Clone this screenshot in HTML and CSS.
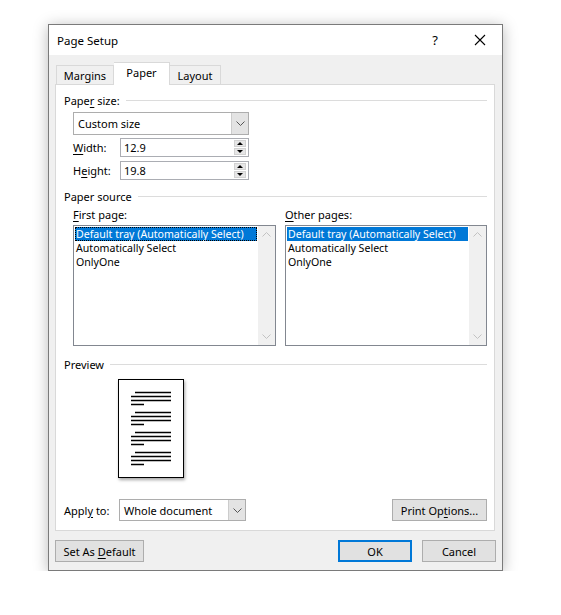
FILE: index.html
```html
<!DOCTYPE html>
<html lang="en">
<head>
  <meta charset="UTF-8">
  <title>Page Setup</title>
  <link rel="stylesheet" href="styles.css">
</head>
<body>
  <div class="dialog">
    <div class="titlebar">
      <span class="title">Page Setup</span>
      <span class="help">?</span>
      <span class="close">
        <svg width="12" height="12" viewBox="0 0 12 12"><path d="M1 1 L11 11 M11 1 L1 11" stroke="#000" stroke-width="1.1" fill="none"/></svg>
      </span>
    </div>

    <div class="tabs">
      <div class="tab tab-margins">Margins</div>
      <div class="tab tab-paper active">Paper</div>
      <div class="tab tab-layout">Layout</div>
    </div>

    <div class="panel">
      <!-- Paper size -->
      <div class="group-title"><span>Pape<u>r</u> size:</span></div>
      <div class="indent">
        <div class="combo size-combo">
          <span class="combo-text">Custom size</span>
          <span class="combo-btn"><svg width="9" height="5" viewBox="0 0 9 5"><path d="M0.5 0.5 L4.5 4.5 L8.5 0.5" stroke="#555" stroke-width="1" fill="none"/></svg></span>
        </div>
        <div class="field-row first">
          <label><u>W</u>idth:</label>
          <div class="spin-input">
            <span class="value">12.9</span>
            <span class="spin"><span class="spin-up"></span><span class="spin-down"></span></span>
          </div>
        </div>
        <div class="field-row">
          <label>H<u>e</u>ight:</label>
          <div class="spin-input">
            <span class="value">19.8</span>
            <span class="spin"><span class="spin-up"></span><span class="spin-down"></span></span>
          </div>
        </div>
      </div>

      <!-- Paper source -->
      <div class="group-title source-title"><span>Paper source</span></div>
      <div class="lists">
        <div class="list-col first-col">
          <div class="list-label"><u>F</u>irst page:</div>
          <div class="listbox">
            <div class="items">
              <div class="item selected">Default tray (Automatically Select)</div>
              <div class="item">Automatically Select</div>
              <div class="item">OnlyOne</div>
            </div>
            <div class="scrollbar">
              <svg width="9" height="5" viewBox="0 0 9 5"><path d="M0.5 4.5 L4.5 0.5 L8.5 4.5" stroke="#c2c2c2" stroke-width="1" fill="none"/></svg>
              <svg width="9" height="5" viewBox="0 0 9 5"><path d="M0.5 0.5 L4.5 4.5 L8.5 0.5" stroke="#c2c2c2" stroke-width="1" fill="none"/></svg>
            </div>
          </div>
        </div>
        <div class="list-col">
          <div class="list-label"><u>O</u>ther pages:</div>
          <div class="listbox">
            <div class="items">
              <div class="item selected plain">Default tray (Automatically Select)</div>
              <div class="item">Automatically Select</div>
              <div class="item">OnlyOne</div>
            </div>
            <div class="scrollbar">
              <svg width="9" height="5" viewBox="0 0 9 5"><path d="M0.5 4.5 L4.5 0.5 L8.5 4.5" stroke="#c2c2c2" stroke-width="1" fill="none"/></svg>
              <svg width="9" height="5" viewBox="0 0 9 5"><path d="M0.5 0.5 L4.5 4.5 L8.5 0.5" stroke="#c2c2c2" stroke-width="1" fill="none"/></svg>
            </div>
          </div>
        </div>
      </div>

      <!-- Preview -->
      <div class="group-title preview-title"><span>Preview</span></div>
      <div class="page">
        <svg width="64" height="97" viewBox="0 0 64 97">
          <g stroke="#000" stroke-width="1.3">
            <path d="M16 12.5 H52 M12 16.5 H52 M12 20.5 H52 M12 24.5 H25"/>
            <path d="M16 32.5 H52 M12 36.5 H52 M12 40.5 H52 M12 44.5 H25"/>
            <path d="M16 52.5 H52 M12 56.5 H52 M12 60.5 H52 M12 64.5 H25"/>
            <path d="M16 72.5 H52 M12 76.5 H52 M12 80.5 H52 M12 84.5 H25"/>
          </g>
        </svg>
      </div>

      <div class="apply-row">
        <label>Appl<u>y</u> to:</label>
        <div class="combo apply-combo">
          <span class="combo-text">Whole document</span>
          <span class="combo-btn"><svg width="9" height="5" viewBox="0 0 9 5"><path d="M0.5 0.5 L4.5 4.5 L8.5 0.5" stroke="#555" stroke-width="1" fill="none"/></svg></span>
        </div>
        <button class="btn print-btn">Print Op<u>t</u>ions...</button>
      </div>
    </div>

    <div class="footer">
      <button class="btn default-btn">Set As <u>D</u>efault</button>
      <button class="btn ok-btn">OK</button>
      <button class="btn cancel-btn">Cancel</button>
    </div>
  </div>
</body>
</html>
```

FILE: styles.css
```css
* {
  box-sizing: border-box;
}

body {
  margin: 0;
  background-color: #fff;
  font-family: "Noto Sans", sans-serif;
  font-size: 11px;
  color: #000;
}

u {
  text-decoration-thickness: 1px;
  text-underline-offset: 2px;
}

.dialog {
  margin: 24px 0 0 48px;
  width: 455px;
  height: 547px;
  border: 1px solid #7a7a7a;
  background-color: #f0f0f0;
  box-shadow: 0 2px 14px rgba(0, 0, 0, 0.28);
  display: flex;
  flex-direction: column;
}

/* title bar */
.titlebar {
  height: 30px;
  background-color: #fff;
  display: flex;
  align-items: center;
  padding-left: 8px;
}

.title {
  flex: 1;
  font-size: 11.5px;
}

.help {
  width: 30px;
  margin-right: 8px;
  text-align: center;
  font-size: 13px;
}

.close {
  width: 44px;
  height: 30px;
  display: flex;
  align-items: center;
  justify-content: center;
}

/* tabs */
.tabs {
  height: 29px;
  display: flex;
  align-items: flex-end;
  padding-left: 7px;
}

.tab {
  height: 19px;
  border: 1px solid #d9d9d9;
  border-bottom: none;
  background-color: #f0f0f0;
  display: flex;
  align-items: center;
  justify-content: center;
}

.tab-margins { width: 58px; }
.tab-paper { width: 56px; }
.tab-layout { width: 51px; border-left: none; }

.tab.active {
  height: 23px;
  margin-bottom: -1px;
  background-color: #fff;
  border-left: none;
  position: relative;
  z-index: 1;
  padding-bottom: 3px;
}

/* panel */
.panel {
  margin: 0 7px 0 6px;
  height: 447px;
  border: 1px solid #d9d9d9;
  background-color: #fff;
  padding: 7px 7px 0 8px;
}

.group-title {
  display: flex;
  align-items: center;
  height: 16px;
}

.group-title::after {
  content: "";
  flex: 1;
  border-top: 1px solid #dcdcdc;
  margin-left: 6px;
}

.indent {
  margin-left: 9px;
}

.combo {
  height: 23px;
  border: 1px solid #adadad;
  background-color: #fff;
  display: flex;
}

.combo-text {
  flex: 1;
  padding-left: 4px;
  display: flex;
  align-items: center;
}

.combo-btn {
  width: 17px;
  background-color: #e3e3e3;
  border-left: 1px solid #cccccc;
  display: flex;
  align-items: center;
  justify-content: center;
}

.size-combo {
  width: 176px;
  margin-top: 4px;
}

.field-row {
  display: flex;
  align-items: center;
  margin-top: 4px;
}

.field-row.first {
  margin-top: 3px;
}

.field-row label {
  width: 47px;
}

.spin-input {
  width: 129px;
  height: 19px;
  border: 1px solid #abadb3;
  display: flex;
  align-items: center;
  padding: 0 2px 0 3px;
}

.value {
  flex: 1;
}

.spin {
  width: 12px;
  height: 15px;
  display: flex;
  flex-direction: column;
  gap: 1px;
}

.spin-up, .spin-down {
  flex: 1;
  background-color: #e6e6e6;
  border: 1px solid #d2d2d2;
  display: flex;
  align-items: center;
  justify-content: center;
}

.spin-up::before {
  content: "";
  border-left: 3px solid transparent;
  border-right: 3px solid transparent;
  border-bottom: 3px solid #000;
}

.spin-down::before {
  content: "";
  border-left: 3px solid transparent;
  border-right: 3px solid transparent;
  border-top: 3px solid #000;
}

/* paper source */
.source-title {
  margin-top: 8px;
}

.lists {
  display: flex;
  gap: 9px;
  margin-left: 9px;
  margin-top: 3px;
}

.list-col {
  width: 202px;
}

.list-col.first-col {
  width: 203px;
}

.list-label {
  height: 16px;
  line-height: 16px;
  margin-bottom: 2px;
}

.listbox {
  height: 121px;
  border: 1px solid #828790;
  display: flex;
}

.items {
  flex: 1;
  padding: 1px 1px 0 1px;
}

.item {
  height: 14px;
  line-height: 14px;
  font-size: 10.6px;
  padding-left: 1px;
  white-space: nowrap;
}

.item.selected {
  background-color: #0078d7;
  color: #fff;
  outline: 1px dotted #000;
  outline-offset: -1px;
}

.item.selected.plain {
  outline: none;
}

.scrollbar {
  width: 17px;
  background-color: #f0f0f0;
  display: flex;
  flex-direction: column;
  justify-content: space-between;
  align-items: center;
  padding: 6px 0 6px;
}

/* preview */
.preview-title {
  margin-top: 10px;
}

.page {
  width: 66px;
  height: 99px;
  margin: 7px 0 0 54px;
  border: 1px solid #000;
  background-color: #fff;
  box-shadow: 1px 2px 3px rgba(0, 0, 0, 0.35);
}

.page svg {
  display: block;
}

.apply-row {
  display: flex;
  align-items: center;
  margin-top: 21px;
}

.apply-row label {
  width: 55px;
}

.apply-combo {
  width: 127px;
  height: 22px;
}

.apply-combo .combo-text {
  padding-left: 4px;
}

.btn {
  height: 22px;
  border: 1px solid #adadad;
  background-color: #e1e1e1;
  font-family: "Noto Sans", sans-serif;
  font-size: 11px;
  color: #000;
  padding: 0;
}

.print-btn {
  width: 95px;
  margin-left: auto;
}

/* footer */
.footer {
  display: flex;
  padding: 9px 6px 0 6px;
}

.default-btn {
  width: 89px;
}

.ok-btn {
  width: 74px;
  margin-left: auto;
  border-color: #0078d7;
  box-shadow: inset 0 0 0 1px #0078d7;
}

.cancel-btn {
  width: 74px;
  margin-left: 10px;
}
```
